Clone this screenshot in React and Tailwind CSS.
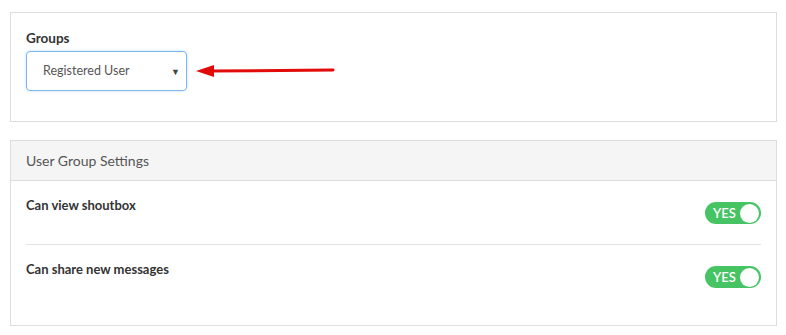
import React from "react";

function Toggle() {
  return (
    <div className="flex h-[22px] w-[56px] items-center justify-between rounded-full bg-[#46c463] pl-[8px] pr-[2px]">
      <span className="text-[13px] font-semibold leading-none text-white">YES</span>
      <span className="h-[19px] w-[19px] rounded-full bg-white"></span>
    </div>
  );
}

export default function App() {
  return (
    <div className="min-h-[335px] bg-white pt-[12px] pl-[10px] text-[#333]" style={{ fontFamily: "Lato, 'Open Sans', sans-serif" }}>
      <div className="w-[767px] border border-[#dddddd] px-[15px] pt-[15px] pb-[30px]">
        <div className="text-[13.5px] font-bold leading-[20px] text-[#333]">Groups</div>
        <div className="mt-[3px] flex items-center">
          <div className="relative flex h-[40px] w-[161px] items-center rounded-[4px] border border-[#7cb6ec] pl-[16px] shadow-[0_0_3px_rgba(102,175,233,0.4)]">
            <span className="text-[12.5px] text-[#555]">Registered User</span>
            <span className="absolute right-[6px] top-[13px] text-[9px] text-[#444]">▼</span>
          </div>
          <svg width="140" height="16" viewBox="0 0 140 16" className="ml-[9px]">
            <polygon points="0,8 18,2 18,14" fill="#e30a0a" />
            <line x1="14" y1="8" x2="137" y2="7" stroke="#e30a0a" strokeWidth="3" strokeLinecap="round" />
          </svg>
        </div>
      </div>
      <div className="mt-[18px] w-[767px] border border-[#dddddd]">
        <div className="flex h-[40px] items-center border-b border-[#dddddd] bg-[#f5f5f5] px-[15px] text-[14px] text-[#555]">
          User Group Settings
        </div>
        <div className="px-[15px]">
          <div className="flex h-[64px] justify-between border-b border-[#e2e2e2] pt-[14px]">
            <span className="text-[13px] font-bold leading-[20px]">Can view shoutbox</span>
            <div className="pt-[7px]"><Toggle /></div>
          </div>
          <div className="flex h-[80px] justify-between pt-[14px]">
            <span className="text-[13px] font-bold leading-[20px]">Can share new messages</span>
            <div className="pt-[7px]"><Toggle /></div>
          </div>
        </div>
      </div>
    </div>
  );
}
